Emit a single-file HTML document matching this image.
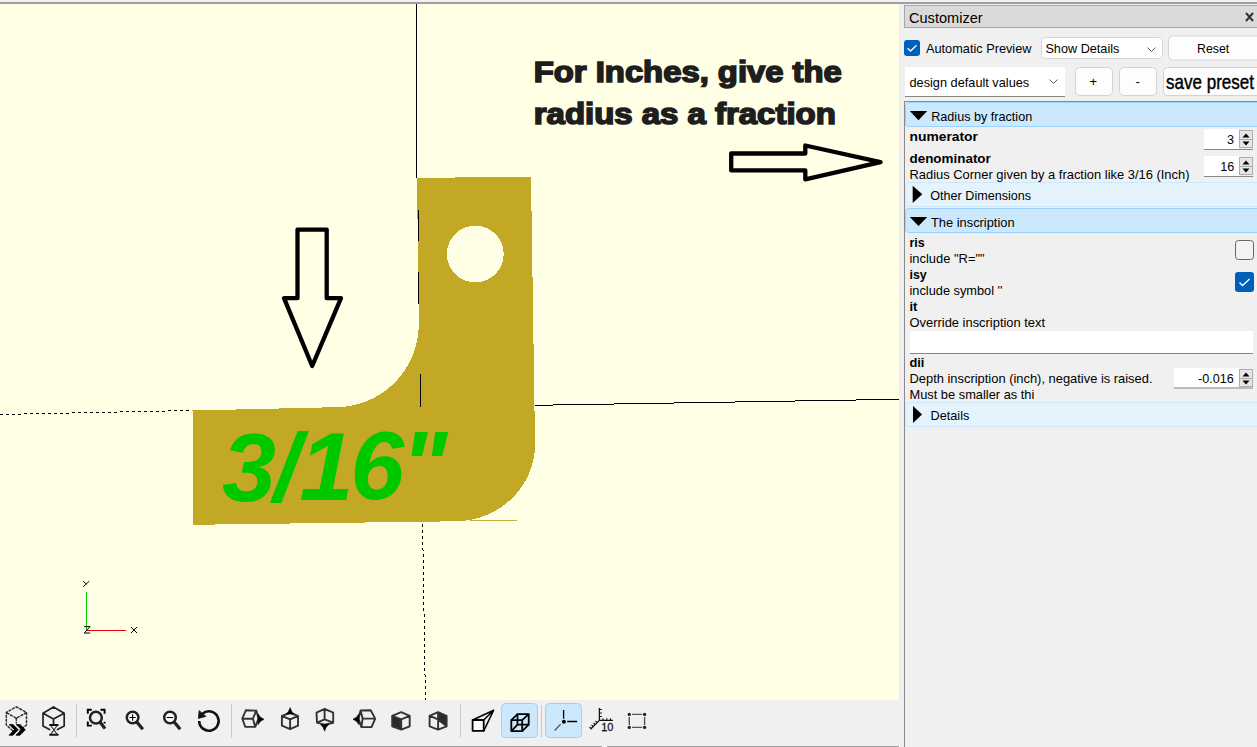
<!DOCTYPE html>
<html><head><meta charset="utf-8">
<style>
html,body{margin:0;padding:0;width:1257px;height:747px;overflow:hidden;background:#f0f0f0;font-family:"Liberation Sans",sans-serif;}
.abs{position:absolute;}
#topband{left:0;top:0;width:1257px;height:2px;background:#f0f0f0;}
#topline{left:0;top:2px;width:1257px;height:2px;background:#a0a0a0;}
#vp{left:0;top:4px;width:899px;height:696px;background:#ffffe5;overflow:hidden;}
#tb{left:0;top:700px;width:899px;height:46px;background:#f0f0f0;}
#tbline{left:0;top:746px;width:899px;height:1px;background:#a0a0a0;}
.t{position:absolute;white-space:nowrap;color:#000;font-size:12px;line-height:1;}
.b{font-weight:bold;}
</style></head><body>
<div class="abs" id="topband"></div>
<div class="abs" id="topline"></div>
<div class="abs" id="vp">
<svg width="899" height="696" viewBox="0 4 899 696" style="position:absolute;left:0;top:0">
<path shape-rendering="crispEdges" d="M417 178 L531 176.5 L535 444 A80 77 0 0 1 455 521.3 L193 524.8 L192.5 410.5 L336 407.2 A83 83 0 0 0 418.8 324 Z" fill="#c3a826"/>
<circle shape-rendering="crispEdges" cx="475.3" cy="254" r="28.4" fill="#ffffe5"/>
<line shape-rendering="crispEdges" x1="416.3" y1="4" x2="417" y2="178" stroke="#000" stroke-width="1"/>
<line shape-rendering="crispEdges" x1="535" y1="405.3" x2="899" y2="399.3" stroke="#000" stroke-width="1"/>
<line shape-rendering="crispEdges" x1="0" y1="414.5" x2="192.5" y2="410.5" stroke="#000" stroke-width="1" stroke-dasharray="3 3"/>
<line shape-rendering="crispEdges" x1="422.6" y1="524" x2="425.4" y2="700" stroke="#000" stroke-width="1" stroke-dasharray="3 3"/>
<line shape-rendering="crispEdges" x1="418.2" y1="209.6" x2="418.3" y2="241.5" stroke="#000" stroke-width="1"/>
<line shape-rendering="crispEdges" x1="418.2" y1="272.3" x2="418.3" y2="304" stroke="#000" stroke-width="1"/>
<line shape-rendering="crispEdges" x1="420.4" y1="374" x2="420.5" y2="406.8" stroke="#000" stroke-width="1"/>
<path d="M297.5 296 L297.5 229.7 L326.7 229.7 L326.7 298.2 L341 298.2 L312.2 366 L284 298.2 L297.5 298.2 Z" fill="none" stroke="#000" stroke-width="4.3" stroke-linejoin="round"/>
<path d="M731.2 153.5 L805.3 153.5 L805.3 145.5 L880.5 162.2 L805.3 179.3 L805.3 170.4 L731.2 170.4 Z" fill="none" stroke="#000" stroke-width="4.3" stroke-linejoin="round"/>
<g font-family="Liberation Sans" font-weight="bold" font-style="italic" font-size="97" fill="#00c800">
<text x="221.9" y="500.9">3</text><text x="273.6" y="500.9">/</text><text x="299.6" y="499.5">1</text><text x="350.3" y="498.5">6</text><text x="401.2" y="497.9">"</text></g>
<text x="533.8" y="82.3" font-family="Liberation Sans" font-weight="bold" font-size="29" fill="#1e1e1e" stroke="#1e1e1e" stroke-width="1.6" textLength="308" lengthAdjust="spacingAndGlyphs">For Inches, give the</text>
<text x="533.8" y="124" font-family="Liberation Sans" font-weight="bold" font-size="29" fill="#1e1e1e" stroke="#1e1e1e" stroke-width="1.6" textLength="302" lengthAdjust="spacingAndGlyphs">radius as a fraction</text>
<line shape-rendering="crispEdges" x1="86.5" y1="592" x2="86.9" y2="630" stroke="#00d000" stroke-width="1"/>
<line shape-rendering="crispEdges" x1="87" y1="630.5" x2="125.7" y2="630.3" stroke="#f00000" stroke-width="1"/>
<path d="M83.2 581.2 L86.3 584 M89.2 581.2 L83.2 586.8 M84.2 626.6 L90 626.6 L84.2 633 L90.2 633 M131 627 L137 633 M137 627 L131 633" fill="none" stroke="#000" stroke-width="1"/>
<line shape-rendering="crispEdges" x1="469.6" y1="520.3" x2="516.8" y2="520.3" stroke="#c8b040" stroke-width="1"/>
</svg>
</div>
<div class="abs" id="tb"></div>
<div class="abs" id="tbline"></div><div class="abs" style="left:602px;top:746px;width:5px;height:1px;background:#f6f6f6"></div>

<svg id="toolbar" width="1257" height="747" viewBox="0 0 1257 747" style="position:absolute;left:0;top:0">
<g fill="none" stroke-linejoin="round" stroke-linecap="round">
<!-- 1 preview: dashed cube -->
<path d="M16.3 706.8 L26.5 712.5 L26.5 725 L20 730 M12.5 730.5 L6.3 725 L6.3 712.5 L16.3 706.8 M7 713 L16.3 718.3 L25.8 713 M16.3 718.3 L16.3 723" stroke="#333" stroke-width="1.5" stroke-dasharray="2 2"/>
<path d="M9.5 724.6 L13 724.6 L18.3 729.8 L13 735.2 L9 735.2 L14.3 729.8 Z M16.5 724.6 L20 724.6 L25.3 729.8 L20 735.2 L16 735.2 L21.3 729.8 Z" fill="#000" stroke="#000" stroke-width="0.8"/>
<!-- 2 render: cube + hourglass -->
<path d="M53.5 707 L64.2 713.2 L64.2 725.9 L57.5 729.6 M49.5 729.6 L43 725.9 L43 713.2 L53.5 707 M43.5 713.5 L53.5 719 L63.7 713.5 M53.5 719 L53.5 723.5" stroke="#222" stroke-width="1.7"/>
<path d="M50 725 L57.8 725 M50 734.8 L57.8 734.8" stroke="#111" stroke-width="1.9"/>
<path d="M51 726 L56.8 733.8 M56.8 726 L51 733.8" stroke="#333" stroke-width="1.1"/>
<!-- sep -->
<path d="M76.5 705 L76.5 737" stroke="#c9c9c9" stroke-width="1"/>
<!-- 3 view all -->
<path d="M87.8 713.8 L87.8 709.8 L91.8 709.8 M100.5 709.8 L104.6 709.8 L104.6 713.8 M87.8 721.5 L87.8 725.6 L91.8 725.6" stroke="#000" stroke-width="1.9" stroke-linecap="butt" stroke-linejoin="miter"/>
<circle cx="95.9" cy="717.7" r="5.9" stroke="#222" stroke-width="2.5"/>
<path d="M100 722 L105 728.6" stroke="#222" stroke-width="3.2" stroke-linecap="butt"/>
<path d="M104.6 721.8 L104.6 723.5" stroke="#000" stroke-width="1.9" stroke-linecap="butt"/>
<!-- 4 zoom in -->
<circle cx="132.6" cy="717.5" r="5.8" fill="#fbfbfb" stroke="#222" stroke-width="2.5"/>
<path d="M129.5 717.5 L135.7 717.5 M132.6 714.3 L132.6 720.7" stroke="#000" stroke-width="1.1" stroke-linecap="butt"/>
<path d="M136.8 722 L142.8 729.3" stroke="#222" stroke-width="3.2" stroke-linecap="butt"/>
<!-- 5 zoom out -->
<circle cx="170" cy="717.5" r="5.8" fill="#fbfbfb" stroke="#222" stroke-width="2.5"/>
<path d="M166.9 717.5 L173.1 717.5" stroke="#000" stroke-width="1.1" stroke-linecap="butt"/>
<path d="M174.2 722 L180.2 729.3" stroke="#222" stroke-width="3.2" stroke-linecap="butt"/>
<!-- 6 reset view -->
<path d="M199.2 721 A9.7 9.7 0 1 0 202.5 713.7" stroke="#111" stroke-width="2.6" stroke-linecap="butt"/>
<path d="M199.1 710.9 L198.4 718.4 L205.7 716.4 Z" fill="#111" stroke="#111" stroke-width="0.8"/>
<!-- sep -->
<path d="M231.5 705 L231.5 737" stroke="#c9c9c9" stroke-width="1"/>
<!-- 7 right view -->
<path d="M242.3 718.5 L245.8 710.3 L256.3 710.6 L258.5 718.6 L255.3 726.9 L245.2 726.7 Z M242.3 718.5 L252.9 718.7 L256.3 710.6 M252.9 718.7 L255.3 726.9" stroke="#333" stroke-width="1.9"/>
<path d="M258.2 714.2 Q260 718 264 719.3 Q260 720.6 258.2 724.4 Z" fill="#000" stroke="#000" stroke-width="0.6"/>
<!-- 8 top view -->
<path d="M290.1 712.9 L298 716 L298 725.7 L290.1 729.2 L281.9 725.7 L281.9 716 Z M281.9 716 L290.1 719.3 L298 716 M290.1 719.3 L290.1 729.2" stroke="#333" stroke-width="1.9"/>
<path d="M290.1 708 Q291.3 712 294.3 714 L285.9 714 Q288.9 712 290.1 708 Z" fill="#000" stroke="#000" stroke-width="0.6"/>
<!-- 9 bottom view -->
<path d="M324.6 708.9 L333.2 712.6 L333.2 722.7 L324.6 724.7 L317 722.7 L316.5 712.6 Z M324.6 708.9 L324.6 719.3 L317 722.7 M324.6 719.3 L333.2 722.7" stroke="#333" stroke-width="1.9"/>
<path d="M324.6 730.8 Q325.8 726.8 328.6 724.6 L320.6 724.6 Q323.4 726.8 324.6 730.8 Z" fill="#000" stroke="#000" stroke-width="0.6"/>
<!-- 10 left view -->
<path d="M358.5 718.6 L360.6 710.5 L370.7 710.2 L375.2 718.6 L371.5 727.1 L361.4 727.1 Z M360.6 710.5 L362.6 718.6 L375.2 718.6 M362.6 718.6 L361.4 727.1" stroke="#333" stroke-width="1.9"/>
<path d="M358.8 714.2 Q357 718 353 719.3 Q357 720.6 358.8 724.4 Z" fill="#000" stroke="#000" stroke-width="0.6"/>
<!-- 11 front view -->
<path d="M392.2 715.8 L401.2 719.4 L401.2 729.6 L392.2 726.3 Z" fill="#2a2a2a"/>
<path d="M401.2 712.1 L409.7 715.8 L409.7 726.3 L401.2 729.6 L392.2 726.3 L392.2 715.8 Z M392.2 715.8 L401.2 719.4 L409.7 715.8 M401.2 719.4 L401.2 729.6" stroke="#333" stroke-width="1.9"/>
<!-- 12 back view -->
<path d="M438.1 712.1 L446.6 715.8 L446.6 726.3 L438.1 719.4 Z" fill="#2a2a2a"/>
<path d="M438.1 712.1 L446.6 715.8 L446.6 726.3 L438.1 729.6 L429.6 726.3 L429.6 715.8 Z M429.6 715.8 L438.1 719.4 L446.6 726.3 M438.1 712.1 L438.1 729.6" stroke="#333" stroke-width="1.9"/>
<!-- sep -->
<path d="M460.5 705 L460.5 737" stroke="#c9c9c9" stroke-width="1"/>
<!-- 13 perspective -->
<rect x="472.6" y="720" width="11.1" height="10.8" fill="#fff" stroke="#000" stroke-width="1.8"/>
<path d="M472.6 720 L493.7 710.2 L483.7 730.8 M483.7 720 L493.7 710.2" stroke="#000" stroke-width="1.5"/>
</g>
<!-- 14 ortho highlighted -->
<rect x="501.5" y="703.5" width="36" height="34" rx="4" fill="#cce8fc" stroke="#99d1fb" stroke-width="1"/>
<g fill="none" stroke="#000" stroke-width="1.8" stroke-linejoin="round">
<rect x="511.3" y="720.2" width="10.9" height="10.9"/>
<rect x="517.5" y="714.1" width="11.2" height="10.6"/>
<path d="M511.3 720.2 L517.5 714.1 M522.2 720.2 L528.7 714.1 M522.2 731.1 L528.7 724.7 M511.3 731.1 L517.5 724.7"/>
</g>
<path d="M541.5 705 L541.5 737" stroke="#c9c9c9" stroke-width="1"/>
<!-- 15 axes highlighted -->
<rect x="545.5" y="703.5" width="36" height="34" rx="4" fill="#cce8fc" stroke="#99d1fb" stroke-width="1"/>
<circle cx="563.9" cy="721.8" r="2" fill="#000"/>
<path d="M563.6 709.9 L563.6 718.7 M567.2 721.5 L577.1 721.5" stroke="#000" stroke-width="1.3"/>
<path d="M560.7 724.1 L554.6 730.5" stroke="#444" stroke-width="1.1"/>
<!-- 16 scale markers -->
<g stroke="#111" stroke-width="1.3" fill="none">
<path d="M599.4 708 L599.4 720.4 L612.9 720.4 M599.4 720.4 L590.5 729.3"/>
<path d="M599.4 709.5 L601.8 709.5 M599.4 713 L601.8 713 M599.4 716.5 L601.8 716.5 M603 720.4 L603 718.2 M606.8 720.4 L606.8 718.2 M610.5 720.4 L610.5 718.2 M597.2 722.6 L595.5 720.9 M595.2 724.6 L593.5 722.9 M593.2 726.6 L591.5 724.9 M591.2 728.6 L589.5 726.9" stroke-width="1.1"/>
</g>
<text x="601.2" y="731.3" font-family="Liberation Sans" font-size="11.8" fill="#1a1a1a" stroke="#1a1a1a" stroke-width="0.3" textLength="12.2" lengthAdjust="spacingAndGlyphs">10</text><path d="M602.2 730.7 L606.6 730.7" stroke="#1a1a1a" stroke-width="1.1"/>
<!-- 17 edges -->
<g fill="#222"><circle cx="629.3" cy="714.4" r="1.7"/><circle cx="644.6" cy="714.4" r="1.7"/><circle cx="629.3" cy="727.4" r="1.7"/><circle cx="644.6" cy="727.4" r="1.7"/></g>
<path d="M632 714.4 L642 714.4 M632 727.4 L642 727.4 M629.3 717 L629.3 725 M644.6 717 L644.6 725" stroke="#555" stroke-width="1.4"/>
</svg>


<svg id="panel" width="1257" height="747" viewBox="0 0 1257 747" style="position:absolute;left:0;top:0" font-family="Liberation Sans" font-size="12.6">
<!-- splitter / frame -->
<rect x="904" y="101" width="1" height="646" fill="#8a8a8a"/>
<rect x="904" y="101" width="353" height="1" fill="#8a8a8a"/>
<!-- title bar -->
<rect x="904.5" y="5.5" width="360" height="22" fill="#dadada" stroke="#a6a6a6" stroke-width="1"/>
<text x="909" y="23" font-size="14.5" textLength="73.6" lengthAdjust="spacingAndGlyphs" fill="#000">Customizer</text>
<path d="M1246 13 L1253 21 M1253 13 L1246 21" stroke="#333" stroke-width="2"/>
<!-- auto preview checkbox -->
<rect x="904" y="40" width="16" height="16" rx="3" fill="#005fb8"/>
<path d="M907.5 48.2 L910.6 51 L916.5 45.3" fill="none" stroke="#fff" stroke-width="1.3"/>
<text x="926" y="53" textLength="105.5" lengthAdjust="spacingAndGlyphs">Automatic Preview</text>
<!-- show details combo -->
<rect x="1041.5" y="37.5" width="121" height="21" rx="3" fill="#fff" stroke="#d6d6d6"/>
<text x="1045.4" y="53" textLength="74" lengthAdjust="spacingAndGlyphs">Show Details</text>
<path d="M1147.5 47.5 L1151.5 51.5 L1155.5 47.5" fill="none" stroke="#555" stroke-width="1"/>
<!-- reset -->
<rect x="1168.5" y="36" width="100" height="24" rx="4" fill="#fdfdfd" stroke="#d3d3d3"/>
<text x="1197" y="53" textLength="32.2" lengthAdjust="spacingAndGlyphs">Reset</text>
<!-- preset combo -->
<rect x="905" y="67" width="160" height="30" fill="#fff"/>
<rect x="905" y="96" width="160" height="1" fill="#868686"/>
<text x="909.5" y="86.6" textLength="119.7" lengthAdjust="spacingAndGlyphs">design default values</text>
<path d="M1049.5 79.5 L1053.5 83.5 L1057.5 79.5" fill="none" stroke="#555" stroke-width="1"/>
<!-- + - -->
<rect x="1075.5" y="67.5" width="37" height="28" rx="4" fill="#fdfdfd" stroke="#d3d3d3"/>
<text x="1089.5" y="86" font-size="13">+</text>
<rect x="1119.5" y="67.5" width="37" height="28" rx="4" fill="#fdfdfd" stroke="#d3d3d3"/>
<text x="1135.5" y="86" font-size="13">-</text>
<rect x="1163.5" y="67.5" width="100" height="28" rx="4" fill="#fdfdfd" stroke="#d3d3d3"/>
<text x="1166" y="88.6" font-size="17" stroke="#000" stroke-width="0.35" textLength="88" lengthAdjust="spacingAndGlyphs" transform="translate(0,88.6) scale(1,1.18) translate(0,-88.6)">save preset</text>
<!-- section: Radius by fraction -->
<rect x="905.5" y="102.5" width="360" height="24" rx="3" fill="#cce8fc" stroke="#99d1ff"/>
<path d="M909.8 111 L927.2 111 L918.5 120.3 Z" fill="#000"/>
<text x="931.2" y="120.5" textLength="101" lengthAdjust="spacingAndGlyphs">Radius by fraction</text>
<text x="909.5" y="140.8" font-weight="bold" font-size="13.4" textLength="68.4" lengthAdjust="spacingAndGlyphs">numerator</text>
<text x="909.5" y="162.8" font-weight="bold" font-size="13.4" textLength="81.3" lengthAdjust="spacingAndGlyphs">denominator</text>
<text x="909.5" y="179.2" textLength="280" lengthAdjust="spacingAndGlyphs">Radius Corner given by a fraction like 3/16 (Inch)</text>
<!-- spinbox numerator -->
<rect x="1204" y="129" width="35" height="20" fill="#fff"/>
<rect x="1204" y="149" width="49" height="1" fill="#868686"/>
<text x="1226.9" y="143.5">3</text>
<rect x="1239.5" y="130.5" width="13" height="17" fill="#e6e6e6" stroke="#adadad"/>
<path d="M1239.5 139.5 L1252.5 139.5" stroke="#adadad" stroke-width="1"/><path d="M1242.5 137.5 L1249.5 137.5 L1246 133.5 Z M1242.5 141.5 L1249.5 141.5 L1246 145.5 Z" fill="#000"/>
<!-- spinbox denominator -->
<rect x="1204" y="156" width="35" height="20" fill="#fff"/>
<rect x="1204" y="176" width="49" height="1" fill="#868686"/>
<text x="1220.2" y="170.6">16</text>
<rect x="1239.5" y="157.5" width="13" height="17" fill="#e6e6e6" stroke="#adadad"/>
<path d="M1239.5 166.5 L1252.5 166.5" stroke="#adadad" stroke-width="1"/><path d="M1242.5 164.5 L1249.5 164.5 L1246 160.5 Z M1242.5 168.5 L1249.5 168.5 L1246 172.5 Z" fill="#000"/>
<!-- section: Other Dimensions -->
<rect x="905.5" y="182.5" width="360" height="24" rx="3" fill="#e5f3fd" stroke="#cce8fc"/>
<path d="M912.7 185.7 L922.3 194.3 L912.7 203 Z" fill="#000"/>
<text x="930.3" y="199.7" textLength="100.8" lengthAdjust="spacingAndGlyphs">Other Dimensions</text>
<!-- section: The inscription -->
<rect x="905.5" y="208.5" width="360" height="24" rx="3" fill="#cce8fc" stroke="#99d1ff"/>
<path d="M909.8 217 L927.2 217 L918.5 226 Z" fill="#000"/>
<text x="931" y="226.5" textLength="83.6" lengthAdjust="spacingAndGlyphs">The inscription</text>
<text x="909.5" y="247.4" font-weight="bold" font-size="12.8" textLength="15.3" lengthAdjust="spacingAndGlyphs">ris</text>
<text x="909.5" y="262.5" textLength="75.1" lengthAdjust="spacingAndGlyphs">include "R=""</text>
<rect x="1235.5" y="240.5" width="18" height="19" rx="3" fill="#f3f3f3" stroke="#666"/>
<text x="909.5" y="279.3" font-weight="bold" font-size="12.8" textLength="17.2" lengthAdjust="spacingAndGlyphs">isy</text>
<text x="909.5" y="294.5" textLength="93" lengthAdjust="spacingAndGlyphs">include symbol ''</text>
<rect x="1235" y="272" width="19" height="20" rx="3" fill="#005fb8"/>
<path d="M1239.5 282.5 L1242.5 285.5 L1249.5 279" fill="none" stroke="#fff" stroke-width="1.4"/>
<text x="909.5" y="311" font-weight="bold" font-size="12.8">it</text>
<text x="909.5" y="326.7" textLength="135.6" lengthAdjust="spacingAndGlyphs">Override inscription text</text>
<rect x="910" y="331" width="343" height="22" fill="#fff"/>
<rect x="910" y="353" width="343" height="1" fill="#868686"/>
<text x="909.5" y="366.6" font-weight="bold" font-size="12.8">dii</text>
<text x="909.5" y="382.6" textLength="243" lengthAdjust="spacingAndGlyphs">Depth inscription (inch), negative is raised.</text>
<text x="909.5" y="398.5" textLength="124.8" lengthAdjust="spacingAndGlyphs">Must be smaller as thi</text>
<rect x="1174" y="368" width="65" height="19.5" fill="#fff"/>
<rect x="1174" y="387.5" width="79" height="1" fill="#868686"/>
<text x="1198" y="382.6">-0.016</text>
<rect x="1239.5" y="369.5" width="13" height="17" fill="#e6e6e6" stroke="#adadad"/>
<path d="M1239.5 378.5 L1252.5 378.5" stroke="#adadad" stroke-width="1"/><path d="M1242.5 376.5 L1249.5 376.5 L1246 372.5 Z M1242.5 380.5 L1249.5 380.5 L1246 384.5 Z" fill="#000"/>
<!-- section: Details -->
<rect x="905.5" y="402.5" width="360" height="24" rx="3" fill="#e5f3fd" stroke="#cce8fc"/>
<path d="M913 406 L922 414.5 L913 423 Z" fill="#000"/>
<text x="930.5" y="419.5" textLength="38.8" lengthAdjust="spacingAndGlyphs">Details</text>
</svg>
</body></html>
